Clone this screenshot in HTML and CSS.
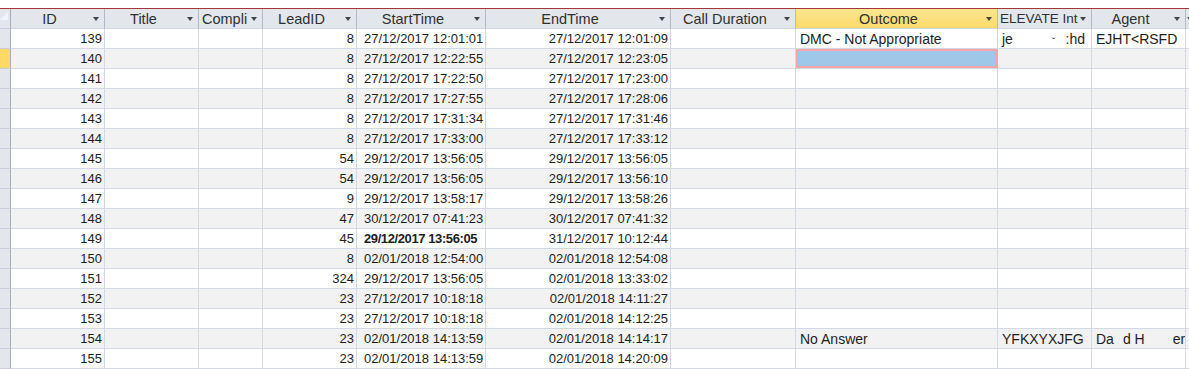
FILE: index.html
```html
<!DOCTYPE html>
<html>
<head>
<meta charset="utf-8">
<link rel="stylesheet" href="styles.css">
</head>
<body>
<div class="sheet">
  <div class="row head">
    <div class="sel corner"><svg width="9" height="9" viewBox="0 0 9 9"><path d="M0 9 L8 1 L8 9 Z" fill="#f3f4f7"/></svg></div>
    <div class="hc"><span class="lbl">ID</span><i class="arr"></i></div>
    <div class="hc"><span class="lbl">Title</span><i class="arr"></i></div>
    <div class="hc"><span class="lbl clip">Compli</span><i class="arr"></i></div>
    <div class="hc"><span class="lbl">LeadID</span><i class="arr"></i></div>
    <div class="hc"><span class="lbl">StartTime</span><i class="arr"></i></div>
    <div class="hc"><span class="lbl">EndTime</span><i class="arr"></i></div>
    <div class="hc"><span class="lbl">Call Duration</span><i class="arr"></i></div>
    <div class="hc active"><span class="lbl">Outcome</span><i class="arr"></i></div>
    <div class="hc"><span class="lbl clip narrow">ELEVATE Int</span><i class="arr"></i></div>
    <div class="hc"><span class="lbl">Agent</span><i class="arr"></i></div>
    <div class="hc last"><i class="arr"></i></div>
  </div>
</div>
<script src="data.js"></script>
</body>
</html>
```
FILE: data.js
```js
const rows = [
  [139, 8, "27/12/2017 12:01:01", "27/12/2017 12:01:09", "DMC - Not Appropriate", "je", "EJHT<RSFD"],
  [140, 8, "27/12/2017 12:22:55", "27/12/2017 12:23:05", "", "", ""],
  [141, 8, "27/12/2017 17:22:50", "27/12/2017 17:23:00", "", "", ""],
  [142, 8, "27/12/2017 17:27:55", "27/12/2017 17:28:06", "", "", ""],
  [143, 8, "27/12/2017 17:31:34", "27/12/2017 17:31:46", "", "", ""],
  [144, 8, "27/12/2017 17:33:00", "27/12/2017 17:33:12", "", "", ""],
  [145, 54, "29/12/2017 13:56:05", "29/12/2017 13:56:05", "", "", ""],
  [146, 54, "29/12/2017 13:56:05", "29/12/2017 13:56:10", "", "", ""],
  [147, 9, "29/12/2017 13:58:17", "29/12/2017 13:58:26", "", "", ""],
  [148, 47, "30/12/2017 07:41:23", "30/12/2017 07:41:32", "", "", ""],
  [149, 45, "29/12/2017 13:56:05", "31/12/2017 10:12:44", "", "", ""],
  [150, 8, "02/01/2018 12:54:00", "02/01/2018 12:54:08", "", "", ""],
  [151, 324, "29/12/2017 13:56:05", "02/01/2018 13:33:02", "", "", ""],
  [152, 23, "27/12/2017 10:18:18", "02/01/2018 14:11:27", "", "", ""],
  [153, 23, "27/12/2017 10:18:18", "02/01/2018 14:12:25", "", "", ""],
  [154, 23, "02/01/2018 14:13:59", "02/01/2018 14:14:17", "No Answer", "YFKXYXJFG", "Da"],
  [155, 23, "02/01/2018 14:13:59", "02/01/2018 14:20:09", "", "", ""]
];
const sheet = document.querySelector('.sheet');
rows.forEach((r, i) => {
  const row = document.createElement('div');
  row.className = 'row' + (i % 2 ? ' alt' : '');
  const cell = (cls, txt) => {
    const d = document.createElement('div');
    d.className = 'c ' + cls;
    if (txt !== undefined) d.textContent = txt;
    row.appendChild(d);
    return d;
  };
  cell('sel' + (r[0] === 140 ? ' cur' : ''));
  cell('num', r[0]);
  cell('txt');
  cell('txt');
  cell('num', r[1]);
  const st = cell('txt start', r[2]);
  if (r[0] === 149) st.classList.add('bold');
  cell('num end', r[3]);
  cell('txt');
  const oc = cell('txt big', r[4]);
  if (r[0] === 140) oc.classList.add('focus');
  const el = cell('txt big', '');
  if (r[0] === 139) {
    el.innerHTML = '<span>je</span><span class="mark">&#711;</span><span>:hd</span>';
    el.classList.add('split');
  } else {
    el.textContent = r[5];
  }
  const ag = cell('txt big', '');
  if (r[0] === 154) {
    ag.innerHTML = 'Da<span class="gap1"></span>d H<span class="gap2"></span>er';
  } else {
    ag.textContent = r[6];
  }
  cell('txt lastc');
  sheet.appendChild(row);
});
```
FILE: styles.css
```css
html, body {
  margin: 0;
  padding: 0;
  background: #fff;
}
body {
  font-family: "Liberation Sans", Arial, sans-serif;
  font-size: 13px;
  color: #1e1e1e;
  overflow: hidden;
}
.sheet {
  margin-top: 8px;
  border-top: 1px solid #a4373a;
  width: 1189px;
  overflow: hidden;
}
.row {
  display: grid;
  grid-template-columns: 11px 94px 94px 64px 94px 129px 185px 125px 202px 94px 94px 40px;
  height: 20px;
  width: 1230px;
}
.row > div {
  box-sizing: border-box;
  height: 20px;
  border-right: 1px solid #d3d9e4;
  border-bottom: 1px solid #d3d9e4;
  white-space: nowrap;
  overflow: hidden;
  line-height: 20px;
}
.row.alt > div {
  background: #f2f2f2;
}
.head > div {
  background: #e3e6eb;
  border-right: 1px solid #b4bac4;
  border-bottom: 1px solid #d0d6e0;
  color: #303030;
  font-size: 14.5px;
  display: flex;
  align-items: center;
  position: relative;
}
.row > .sel,
.row.alt > .sel {
  background: #e3e6eb;
  border-right: 1px solid #a9afb9;
  border-bottom: 1px solid #c9ced7;
}
.row > .sel.cur {
  background: #ffd966;
}
.corner {
  align-items: flex-start !important;
  padding-top: 2px;
}
.hc .lbl {
  flex: 1;
  text-align: center;
  padding-right: 16px;
  overflow: hidden;
}
.hc .lbl.clip {
  flex: 0 1 auto;
  text-align: left;
  padding: 0;
  margin-left: 3px;
  margin-right: 12px;
}
.hc .lbl.narrow {
  font-size: 13.5px;
  margin-left: 2px;
}
.head > .hc.active {
  background: linear-gradient(#fde68f, #fcd96b);
}
.arr {
  position: absolute;
  right: 5px;
  top: 8px;
  width: 0;
  height: 0;
  border-left: 3.5px solid transparent;
  border-right: 3.5px solid transparent;
  border-top: 4px solid #444;
}
.hc.last .arr {
  left: 1px;
  right: auto;
}
.c.num {
  text-align: right;
  padding-right: 2px;
}
.c.txt {
  text-align: left;
  padding-left: 4px;
}
.c.big {
  font-size: 14px;
}
.c.start {
  padding-left: 7px;
}
.c.bold {
  font-weight: bold;
  letter-spacing: -0.4px;
}
.row > .c.focus,
.row.alt > .c.focus {
  background: #9fc7e8;
  box-shadow: inset 0 0 0 2px #f3a5ab;
  border-right-color: #f3a5ab;
}
.c.split {
  display: flex;
  padding-right: 6px;
}
.c.split span:first-child {
  flex: 1;
}
.c.split .mark {
  margin-right: 10px;
  font-size: 11px;
  line-height: 26px;
}
.gap1 {
  display: inline-block;
  width: 9px;
}
.gap2 {
  display: inline-block;
  width: 28px;
}
```
